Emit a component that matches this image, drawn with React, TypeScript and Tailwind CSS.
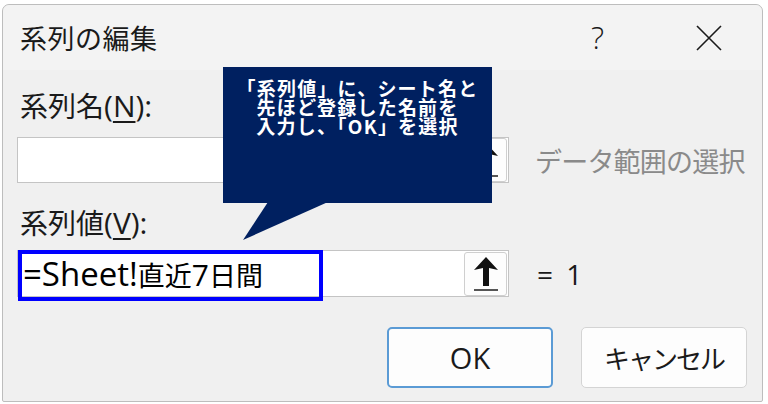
import React from "react";

const font = { fontFamily: '"Noto Sans CJK JP", "Noto Sans", sans-serif' };
const latin = { fontFamily: '"Open Sans", "Noto Sans", sans-serif' };

function PickButton() {
  return (
    <div className="w-[43px] h-[44px] mr-[1px] bg-[#fdfdfd] border border-[#cfcfcf] rounded-[3px] flex items-center justify-center">
      <svg width="26" height="36" viewBox="0 0 26 36">
        <polygon points="13,1 25,14 16,12 16,30 10,30 10,12 1,14" fill="#111" />
        <rect x="1" y="33" width="24" height="2" fill="#555" />
      </svg>
    </div>
  );
}

export default function App() {
  return (
    <div className="w-[768px] h-[404px] bg-white pt-[4px] pl-[2px]" style={font}>
      <div className="relative w-[761px] h-[398px] border border-[#bdbdbd] rounded-t-[7px] rounded-b-[2px] bg-[#f0f0f0] flex flex-col overflow-visible">
        {/* title bar */}
        <div className="h-[65px] bg-[#f3f3f3] rounded-t-[7px] flex items-center pl-[17px] pr-[40px] shrink-0">
          <div className="text-[27px] text-[#1a1a1a] leading-none tracking-[0.5px]">系列の編集</div>
          <div className="ml-auto text-[31px] text-[#1a1a1a] font-light leading-none mr-[92px]" style={latin}>?</div>
          <svg width="26" height="26" viewBox="0 0 26 26">
            <path d="M1 1 L25 25 M25 1 L1 25" stroke="#1a1a1a" strokeWidth="1.6" fill="none" />
          </svg>
        </div>
        {/* body */}
        <div className="flex flex-col pl-[14px] pr-[14px] pt-[18px]">
          <div className="h-[34px] leading-[34px] text-[28px] text-[#1a1a1a] pl-[3px] whitespace-nowrap">
            系列名<span className="text-[30px]" style={latin}>(<span className="underline underline-offset-[4px] decoration-[2px]">N</span>):</span>
          </div>
          <div className="mt-[15px] flex items-center">
            <div className="w-[492px] h-[46px] bg-white border border-[#c4c4c4] flex items-center justify-end shrink-0">
              <PickButton />
            </div>
            <div className="ml-[26px] text-[27px] text-[#8a8a8a] leading-none whitespace-nowrap tracking-[-0.8px]">データ範囲の選択</div>
          </div>
          <div className="mt-[22px] h-[34px] leading-[34px] text-[28px] text-[#1a1a1a] pl-[3px] whitespace-nowrap">
            系列値<span className="text-[30px]" style={latin}>(<span className="underline underline-offset-[4px] decoration-[2px]">V</span>):</span>
          </div>
          <div className="mt-[11px] flex items-center">
            <div className="relative w-[492px] h-[47px] bg-white border border-[#c4c4c4] flex items-center shrink-0">
              <div className="pl-[5px] text-[27px] text-black leading-none whitespace-nowrap">
                <span className="text-[33px]" style={latin}>=Sheet!</span>直近<span className="text-[30px]" style={latin}>7</span>日間
              </div>
              <div className="ml-auto">
                <PickButton />
              </div>
              <div className="absolute left-[0px] top-[-1px] w-[305px] h-[51px] border-[4px] border-[#0000ff]" />
            </div>
            <div className="ml-[28px] text-[28px] text-[#1a1a1a] leading-none whitespace-nowrap tracking-[3px]" style={latin}>= 1</div>
          </div>
          <div className="mt-[30px] flex justify-end gap-[28px] pr-[1px]">
            <div className="w-[166px] h-[61px] bg-[#fdfdfd] border-[2px] border-[#5b9bd5] rounded-[5px] flex items-center justify-center text-[29px] text-[#1a1a1a]" style={latin}>
              OK
            </div>
            <div className="w-[166px] h-[61px] bg-[#fdfdfd] border border-[#d4d4d4] rounded-[5px] flex items-center justify-center text-[26px] text-[#1a1a1a] tracking-[-2px] whitespace-nowrap">
              キャンセル
            </div>
          </div>
        </div>
        {/* callout */}
        <div className="absolute left-[220px] top-[62px] w-[269px] h-[136px] bg-[#002060] pt-[11px]">
          <div className="text-white font-bold text-[19px] leading-[19px] text-center whitespace-nowrap tracking-[1.2px]">
            <div>「系列値」に、シート名と</div>
            <div>先ほど登録した名前を</div>
            <div>入力し、「OK」を選択</div>
          </div>
          <svg className="absolute left-0 top-[135px]" width="110" height="40" viewBox="0 0 110 40">
            <polygon points="45,0 105,0 20,38" fill="#002060" />
          </svg>
        </div>
      </div>
    </div>
  );
}
